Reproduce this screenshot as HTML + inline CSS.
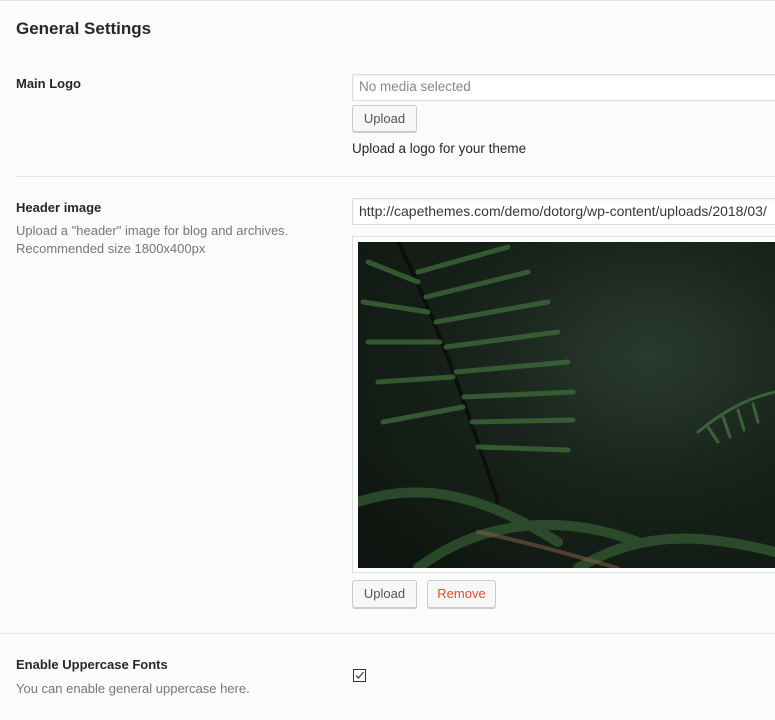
<!DOCTYPE html>
<html><head><meta charset="utf-8">
<style>
html,body{margin:0;padding:0;}
body{width:775px;height:720px;background:#fbfbfb;font-family:"Liberation Sans",sans-serif;position:relative;overflow:hidden;color:#23282d;}
.a{position:absolute;white-space:nowrap;}
.h{font-size:17px;font-weight:bold;color:#23282d;}
.lbl{font-size:13px;font-weight:bold;color:#23282d;}
.desc{font-size:13px;color:#72777c;line-height:18px;}
.inp{position:absolute;background:#fff;border:1px solid #ddd;box-shadow:inset 0 1px 2px rgba(0,0,0,.07);font-size:13px;box-sizing:border-box;padding-left:6px;line-height:24px;}
.btn{position:absolute;background:#f7f7f7;border:1px solid #ccc;border-radius:3px;box-shadow:0 1px 0 #ccc;font-size:13px;color:#555;box-sizing:border-box;text-align:center;line-height:25px;}
.hr{position:absolute;height:1px;background:#e5e5e5;}
</style></head><body>
<div class="hr" style="left:0;top:0;width:775px;background:#e2e2e2"></div>
<div class="a h" style="left:16px;top:19px">General Settings</div>

<div class="a lbl" style="left:16px;top:76px">Main Logo</div>
<div class="inp" style="left:352px;top:74px;width:430px;height:27px;color:#888;font-size:13.5px">No media selected</div>
<div class="btn" style="left:352px;top:105px;width:65px;height:27px">Upload</div>
<div class="a" style="left:352px;top:141px;font-size:13.5px;color:#23282d">Upload a logo for your theme</div>

<div class="hr" style="left:16px;top:176px;width:759px"></div>

<div class="a lbl" style="left:16px;top:200px">Header image</div>
<div class="a desc" style="left:16px;top:222px">Upload a "header" image for blog and archives.<br>Recommended size 1800x400px</div>
<div class="inp" style="left:352px;top:198px;width:430px;height:27px;color:#32373c;font-size:14px">http://capethemes.com/demo/dotorg/wp-content/uploads/2018/03/</div>

<div style="position:absolute;left:352px;top:236px;width:430px;height:337px;border:1px solid #ddd;box-sizing:border-box;background:#fff"></div>
<div style="position:absolute;left:358px;top:242px;width:417px;height:326px;overflow:hidden;background:radial-gradient(ellipse at 70% 35%,#2a3a2e 0%,#17221a 45%,#0d130e 100%)">
<svg width="417" height="326" viewBox="0 0 417 326">
<g fill="none" stroke-linecap="round">
<path d="M40 0 C80 80 110 170 140 260" stroke="#0b0f0b" stroke-width="4"/>
<g stroke="#3f6d3a" stroke-width="5" opacity=".75">
<path d="M60 30 L150 5"/><path d="M68 55 L170 30"/><path d="M78 80 L190 60"/><path d="M88 105 L200 90"/><path d="M98 130 L210 120"/><path d="M106 155 L215 150"/><path d="M114 180 L215 178"/><path d="M120 205 L210 208"/>
<path d="M60 40 L10 20"/><path d="M70 70 L5 60"/><path d="M82 100 L10 100"/><path d="M95 135 L20 140"/><path d="M105 165 L25 180"/>
</g>
<g stroke="#4a7a45" stroke-width="3" opacity=".7">
<path d="M340 190 C370 165 395 155 417 150"/>
<path d="M350 185 L360 200"/><path d="M365 175 L372 195"/><path d="M380 168 L386 188"/><path d="M395 162 L400 180"/>
</g>
<g stroke="#365e34" stroke-width="10" opacity=".7">
<path d="M0 260 C60 240 120 250 200 300"/><path d="M60 326 C120 280 200 270 280 300"/><path d="M220 326 C280 290 340 290 417 310"/>
</g>
<path d="M120 290 C170 300 220 315 260 326" stroke="#7a5a45" stroke-width="4" opacity=".6"/>
</g></svg>
</div>

<div class="btn" style="left:352px;top:580px;width:65px;height:28px;line-height:26px">Upload</div>
<div class="btn" style="left:427px;top:580px;width:69px;height:28px;line-height:26px;color:#e14d2a">Remove</div>

<div class="hr" style="left:0;top:633px;width:775px"></div>

<div class="a lbl" style="left:16px;top:657px">Enable Uppercase Fonts</div>
<div class="a desc" style="left:16px;top:680px">You can enable general uppercase here.</div>
<div style="position:absolute;left:353px;top:669px;width:13px;height:13px;border:1px solid #333;box-sizing:border-box;background:#fff">
<svg width="11" height="11" viewBox="0 0 11 11" style="position:absolute;left:0;top:0"><path d="M2 5.5 L4.5 8 L9.5 2" stroke="#444" stroke-width="1.3" fill="none"/></svg>
</div>
</body></html>
